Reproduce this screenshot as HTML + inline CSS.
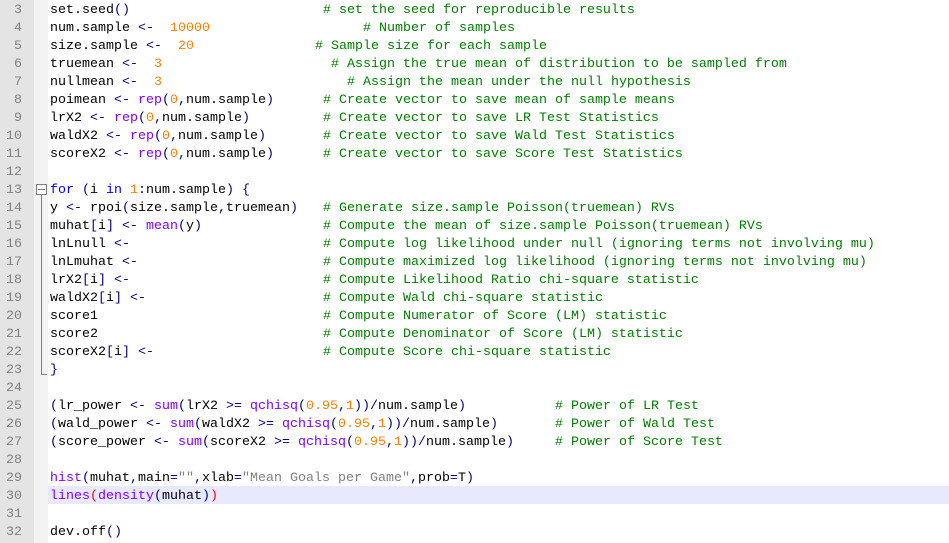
<!DOCTYPE html>
<html><head><meta charset="utf-8"><style>
html,body{margin:0;padding:0;width:949px;height:543px;overflow:hidden;background:#fff;}
#g{position:absolute;left:0;top:0;width:34px;height:543px;background:#e4e4e4;}
#f{position:absolute;left:34px;top:0;width:14px;height:543px;background:#f3f3f3;}
.n{position:absolute;left:0;width:22px;text-align:right;color:#808080;font:13.33px/18px "Liberation Mono",monospace;margin-top:2px;}
.l{position:absolute;left:50px;height:18px;white-space:pre;font:13.33px/18px "Liberation Mono",monospace;color:#000;margin-top:2px;}
.c{position:absolute;white-space:pre;color:#008000;font:13.33px/18px "Liberation Mono",monospace;margin-top:2px;}
.k{color:#0000ff}.fn{color:#8000ff}.nu{color:#ff8000}.o{color:#000080}.p{color:#000080}.s{color:#808080}.r{color:#ff0000}
#hl{position:absolute;left:48px;top:486px;width:901px;height:18px;background:#e8e8ff;}
</style></head><body>
<div id="g"></div><div id="f"></div><div id="hl"></div>
<div style="position:absolute;left:36px;top:184px;width:9px;height:9px;border:1px solid #808080;background:#fff"></div>
<div style="position:absolute;left:38px;top:189px;width:7px;height:1px;background:#808080"></div>
<div style="position:absolute;left:41px;top:195px;width:1px;height:180px;background:#808080"></div>
<div style="position:absolute;left:41px;top:374px;width:6px;height:1px;background:#808080"></div>

<div class="n" style="top:0">3</div><div class="n" style="top:18px">4</div><div class="n" style="top:36px">5</div><div class="n" style="top:54px">6</div><div class="n" style="top:72px">7</div><div class="n" style="top:90px">8</div><div class="n" style="top:108px">9</div><div class="n" style="top:126px">10</div><div class="n" style="top:144px">11</div><div class="n" style="top:162px">12</div><div class="n" style="top:180px">13</div><div class="n" style="top:198px">14</div><div class="n" style="top:216px">15</div><div class="n" style="top:234px">16</div><div class="n" style="top:252px">17</div><div class="n" style="top:270px">18</div><div class="n" style="top:288px">19</div><div class="n" style="top:306px">20</div><div class="n" style="top:324px">21</div><div class="n" style="top:342px">22</div><div class="n" style="top:360px">23</div><div class="n" style="top:378px">24</div><div class="n" style="top:396px">25</div><div class="n" style="top:414px">26</div><div class="n" style="top:432px">27</div><div class="n" style="top:450px">28</div><div class="n" style="top:468px">29</div><div class="n" style="top:486px">30</div><div class="n" style="top:504px">31</div><div class="n" style="top:522px">32</div>

<div class="l" style="top:0">set.seed<span class="p">()</span></div><div class="c" style="left:323px;top:0"># set the seed for reproducible results</div>
<div class="l" style="top:18px">num.sample <span class="o">&lt;-</span>  <span class="nu">10000</span></div><div class="c" style="left:363px;top:18px"># Number of samples</div>
<div class="l" style="top:36px">size.sample <span class="o">&lt;-</span>  <span class="nu">20</span></div><div class="c" style="left:315px;top:36px"># Sample size for each sample</div>
<div class="l" style="top:54px">truemean <span class="o">&lt;-</span>  <span class="nu">3</span></div><div class="c" style="left:331px;top:54px"># Assign the true mean of distribution to be sampled from</div>
<div class="l" style="top:72px">nullmean <span class="o">&lt;-</span>  <span class="nu">3</span></div><div class="c" style="left:347px;top:72px"># Assign the mean under the null hypothesis</div>
<div class="l" style="top:90px">poimean <span class="o">&lt;-</span> <span class="fn">rep</span><span class="p">(</span><span class="nu">0</span><span class="p">,</span>num.sample<span class="p">)</span></div><div class="c" style="left:323px;top:90px"># Create vector to save mean of sample means</div>
<div class="l" style="top:108px">lrX2 <span class="o">&lt;-</span> <span class="fn">rep</span><span class="p">(</span><span class="nu">0</span><span class="p">,</span>num.sample<span class="p">)</span></div><div class="c" style="left:323px;top:108px"># Create vector to save LR Test Statistics</div>
<div class="l" style="top:126px">waldX2 <span class="o">&lt;-</span> <span class="fn">rep</span><span class="p">(</span><span class="nu">0</span><span class="p">,</span>num.sample<span class="p">)</span></div><div class="c" style="left:323px;top:126px"># Create vector to save Wald Test Statistics</div>
<div class="l" style="top:144px">scoreX2 <span class="o">&lt;-</span> <span class="fn">rep</span><span class="p">(</span><span class="nu">0</span><span class="p">,</span>num.sample<span class="p">)</span></div><div class="c" style="left:323px;top:144px"># Create vector to save Score Test Statistics</div>
<div class="l" style="top:180px"><span class="k">for</span> <span class="p">(</span>i <span class="k">in</span> <span class="nu">1</span><span class="o">:</span>num.sample<span class="p">)</span> <span class="p">{</span></div>
<div class="l" style="top:198px">y <span class="o">&lt;-</span> rpoi<span class="p">(</span>size.sample<span class="p">,</span>truemean<span class="p">)</span></div><div class="c" style="left:323px;top:198px"># Generate size.sample Poisson(truemean) RVs</div>
<div class="l" style="top:216px">muhat<span class="p">[</span>i<span class="p">]</span> <span class="o">&lt;-</span> <span class="fn">mean</span><span class="p">(</span>y<span class="p">)</span></div><div class="c" style="left:323px;top:216px"># Compute the mean of size.sample Poisson(truemean) RVs</div>
<div class="l" style="top:234px">lnLnull <span class="o">&lt;-</span></div><div class="c" style="left:323px;top:234px"># Compute log likelihood under null (ignoring terms not involving mu)</div>
<div class="l" style="top:252px">lnLmuhat <span class="o">&lt;-</span></div><div class="c" style="left:323px;top:252px"># Compute maximized log likelihood (ignoring terms not involving mu)</div>
<div class="l" style="top:270px">lrX2<span class="p">[</span>i<span class="p">]</span> <span class="o">&lt;-</span></div><div class="c" style="left:323px;top:270px"># Compute Likelihood Ratio chi-square statistic</div>
<div class="l" style="top:288px">waldX2<span class="p">[</span>i<span class="p">]</span> <span class="o">&lt;-</span></div><div class="c" style="left:323px;top:288px"># Compute Wald chi-square statistic</div>
<div class="l" style="top:306px">score1</div><div class="c" style="left:323px;top:306px"># Compute Numerator of Score (LM) statistic</div>
<div class="l" style="top:324px">score2</div><div class="c" style="left:323px;top:324px"># Compute Denominator of Score (LM) statistic</div>
<div class="l" style="top:342px">scoreX2<span class="p">[</span>i<span class="p">]</span> <span class="o">&lt;-</span></div><div class="c" style="left:323px;top:342px"># Compute Score chi-square statistic</div>
<div class="l" style="top:360px"><span class="p">}</span></div>
<div class="l" style="top:396px"><span class="p">(</span>lr_power <span class="o">&lt;-</span> <span class="fn">sum</span><span class="p">(</span>lrX2 <span class="o">&gt;=</span> <span class="fn">qchisq</span><span class="p">(</span><span class="nu">0.95</span><span class="p">,</span><span class="nu">1</span><span class="p">))</span><span class="o">/</span>num.sample<span class="p">)</span></div><div class="c" style="left:555px;top:396px"># Power of LR Test</div>
<div class="l" style="top:414px"><span class="p">(</span>wald_power <span class="o">&lt;-</span> <span class="fn">sum</span><span class="p">(</span>waldX2 <span class="o">&gt;=</span> <span class="fn">qchisq</span><span class="p">(</span><span class="nu">0.95</span><span class="p">,</span><span class="nu">1</span><span class="p">))</span><span class="o">/</span>num.sample<span class="p">)</span></div><div class="c" style="left:555px;top:414px"># Power of Wald Test</div>
<div class="l" style="top:432px"><span class="p">(</span>score_power <span class="o">&lt;-</span> <span class="fn">sum</span><span class="p">(</span>scoreX2 <span class="o">&gt;=</span> <span class="fn">qchisq</span><span class="p">(</span><span class="nu">0.95</span><span class="p">,</span><span class="nu">1</span><span class="p">))</span><span class="o">/</span>num.sample<span class="p">)</span></div><div class="c" style="left:555px;top:432px"># Power of Score Test</div>
<div class="l" style="top:468px"><span class="fn">hist</span><span class="p">(</span>muhat<span class="p">,</span>main<span class="o">=</span><span class="s">""</span><span class="p">,</span>xlab<span class="o">=</span><span class="s">"Mean Goals per Game"</span><span class="p">,</span>prob<span class="o">=</span>T<span class="p">)</span></div>
<div class="l" style="top:486px"><span class="fn">lines</span><span class="r">(</span><span class="fn">density</span><span class="p">(</span>muhat<span class="p">)</span><span class="r">)</span></div>
<div class="l" style="top:522px">dev.off<span class="p">()</span></div>
</body></html>
